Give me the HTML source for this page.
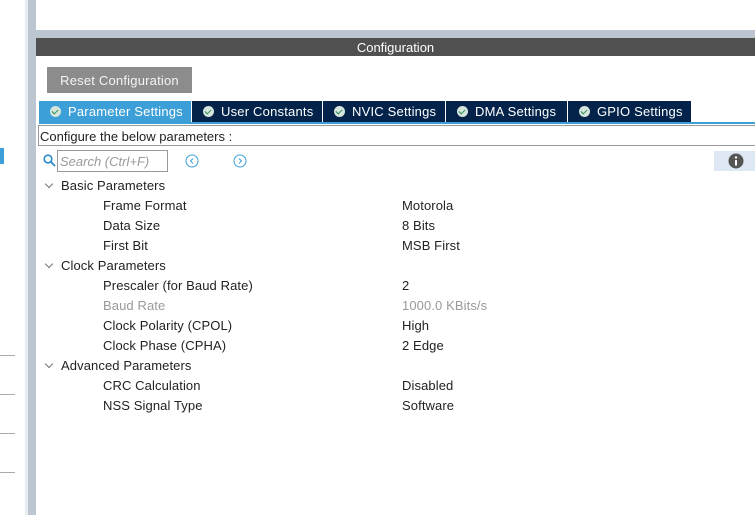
<!DOCTYPE html>
<html><head><style>
*{margin:0;padding:0;box-sizing:border-box}
body{width:755px;height:515px;overflow:hidden;background:#fff;font-family:"Liberation Sans",Arial,sans-serif;font-size:13px;color:#222;position:relative}
.a{position:absolute}
.tab{position:absolute;top:101px;height:21px;background:#03234b;color:#fff;font-size:13px;line-height:22px;padding-left:11px;white-space:nowrap;letter-spacing:0.2px}
.tab i{display:inline-block;width:11px;height:11px;border-radius:50%;background:#d6e6dc;margin-right:7px;vertical-align:-1px;position:relative}
.tab i:after{content:"";position:absolute;left:3px;top:2px;width:3px;height:5px;border:solid #2a8a5a;border-width:0 1.6px 1.6px 0;transform:rotate(45deg)}
.row{position:absolute;height:20px;line-height:22px;font-size:13px;letter-spacing:0.1px}
.chev{position:absolute;width:6px;height:6px;border:solid #777;border-width:0 1px 1px 0;transform:rotate(45deg)}
</style></head><body>
<div class="a" style="left:0;top:148px;width:4px;height:16px;background:#3c9fd8"></div>
<div class="a" style="left:0;top:355px;width:15px;height:1px;background:#aaa"></div>
<div class="a" style="left:0;top:394px;width:15px;height:1px;background:#aaa"></div>
<div class="a" style="left:0;top:433px;width:15px;height:1px;background:#aaa"></div>
<div class="a" style="left:0;top:472px;width:15px;height:1px;background:#aaa"></div>
<div class="a" style="left:25px;top:0;width:3px;height:515px;background:#e6ecf2"></div>
<div class="a" style="left:28px;top:0;width:8px;height:515px;background:#bcc6d0"></div>
<div class="a" style="left:36px;top:30px;width:719px;height:8px;background:#bcc6d0"></div>
<div class="a" style="left:36px;top:38px;width:719px;height:18px;background:#505050;color:#fff;text-align:center;line-height:19px;font-size:13px">Configuration</div>
<div class="a" style="left:47px;top:67px;width:145px;height:26px;background:#8c8c8c;color:#f4f4f4;line-height:27px;text-align:center;font-size:13px;letter-spacing:0.2px">Reset Configuration</div>
<div class="tab" style="left:39px;width:152px;background:#3c9fd8">
<i></i>Parameter Settings</div>
<div class="tab" style="left:192px;width:130px"><i></i>User Constants</div>
<div class="tab" style="left:323px;width:122px"><i></i>NVIC Settings</div>
<div class="tab" style="left:446px;width:121px"><i></i>DMA Settings</div>
<div class="tab" style="left:568px;width:123px"><i></i>GPIO Settings</div>
<div class="a" style="left:39px;top:122px;width:716px;height:2px;background:#3c9fd8"></div>
<div class="a" style="left:38px;top:125px;width:730px;height:21px;border:1px solid #999;line-height:21px;padding-left:1px;font-size:13px">Configure the below parameters :</div>
<svg class="a" style="left:43px;top:154px" width="13" height="13"><circle cx="5" cy="5" r="3.8" fill="none" stroke="#2a8ad0" stroke-width="1.6"/><line x1="8" y1="8" x2="12" y2="12" stroke="#2a8ad0" stroke-width="1.8"/></svg>
<div class="a" style="left:57px;top:150px;width:111px;height:22px;border:1px solid #999;color:#999;font-style:italic;line-height:21px;padding-left:2px;font-size:13px">Search (Ctrl+F)</div>
<svg class="a" style="left:185px;top:154px" width="14" height="14"><circle cx="7" cy="7" r="6" fill="none" stroke="#3c9fd8"/><path d="M8 4.5L5.5 7L8 9.5" fill="none" stroke="#3c9fd8"/></svg>
<svg class="a" style="left:233px;top:154px" width="14" height="14"><circle cx="7" cy="7" r="6" fill="none" stroke="#3c9fd8"/><path d="M6 4.5L8.5 7L6 9.5" fill="none" stroke="#3c9fd8"/></svg>
<div class="a" style="left:714px;top:151px;width:41px;height:20px;background:#dde8f4"></div>
<svg class="a" style="left:728px;top:153px" width="16" height="16"><circle cx="8" cy="8" r="7.5" fill="#555"/><rect x="7" y="7" width="2" height="5.5" fill="#fff"/><circle cx="8" cy="4.5" r="1.2" fill="#fff"/></svg>

<div class="chev" style="left:46px;top:181px"></div><div class="row" style="left:61px;top:175px">Basic Parameters</div>
<div class="row" style="left:103px;top:195px">Frame Format</div><div class="row" style="left:402px;top:195px">Motorola</div>
<div class="row" style="left:103px;top:215px">Data Size</div><div class="row" style="left:402px;top:215px">8 Bits</div>
<div class="row" style="left:103px;top:235px">First Bit</div><div class="row" style="left:402px;top:235px">MSB First</div>
<div class="chev" style="left:46px;top:261px"></div><div class="row" style="left:61px;top:255px">Clock Parameters</div>
<div class="row" style="left:103px;top:275px">Prescaler (for Baud Rate)</div><div class="row" style="left:402px;top:275px">2</div>
<div class="row" style="left:103px;top:295px;color:#999">Baud Rate</div><div class="row" style="left:402px;top:295px;color:#999">1000.0 KBits/s</div>
<div class="row" style="left:103px;top:315px">Clock Polarity (CPOL)</div><div class="row" style="left:402px;top:315px">High</div>
<div class="row" style="left:103px;top:335px">Clock Phase (CPHA)</div><div class="row" style="left:402px;top:335px">2 Edge</div>
<div class="chev" style="left:46px;top:361px"></div><div class="row" style="left:61px;top:355px">Advanced Parameters</div>
<div class="row" style="left:103px;top:375px">CRC Calculation</div><div class="row" style="left:402px;top:375px">Disabled</div>
<div class="row" style="left:103px;top:395px">NSS Signal Type</div><div class="row" style="left:402px;top:395px">Software</div>
</body></html>
